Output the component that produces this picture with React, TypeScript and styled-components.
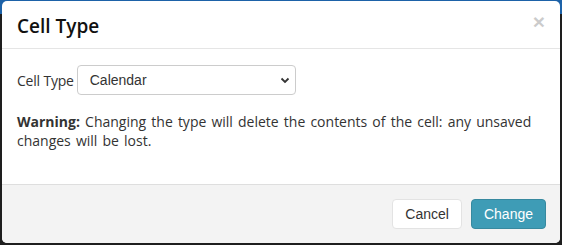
import styled, { createGlobalStyle } from "styled-components";

const GlobalStyle = createGlobalStyle`
    html, body {
        margin: 0;
        padding: 0;
    }

    body {
        width: 562px;
        height: 245px;
        overflow: hidden;
        background: linear-gradient(#1d62a8 0, #1d62a8 14px, #1e1e1e 14px);
    }
`;

const App = () => {
    return (
        <>
            <GlobalStyle />
            <Modal>
                <Header>
                    <Title>Cell Type</Title>
                    <CloseButton aria-label="Close">×</CloseButton>
                </Header>
                <Body>
                    <Field>
                        <Label>Cell Type</Label>
                        <SelectBox>
                            <span>Calendar</span>
                            <svg width="10" height="7" viewBox="0 0 10 7">
                                <path
                                    d="M1.5 1.5 L5 5 L8.5 1.5"
                                    fill="none"
                                    stroke="#333"
                                    strokeWidth="1.8"
                                />
                            </svg>
                        </SelectBox>
                    </Field>
                    <Warning>
                        <strong>Warning:</strong> Changing the type will delete the
                        contents of the cell: any unsaved changes will be lost.
                    </Warning>
                </Body>
                <Footer>
                    <Button>Cancel</Button>
                    <Button $primary>Change</Button>
                </Footer>
            </Modal>
        </>
    );
};

const Modal = styled.div`
    display: flex;
    flex-direction: column;

    width: 558px;
    height: 242px;

    margin: 1px 2px 0 2px;

    background: #fff;
    border-radius: 5px;
    overflow: hidden;
`;

const Header = styled.div`
    display: flex;
    align-items: center;
    justify-content: space-between;

    height: 47px;

    padding: 0 15px;

    border-bottom: 1px solid #e5e5e5;
`;

const Title = styled.h4`
    margin: 0;
    padding-top: 2px;

    font-family: "Open Sans", sans-serif;
    font-size: 19px;
    font-weight: 600;
    color: #111;
`;

const CloseButton = styled.span`
    margin-top: -6px;

    font-family: "Liberation Sans", Arial, sans-serif;
    font-size: 21px;
    font-weight: 700;
    color: #000;
    opacity: 0.2;
`;

const Body = styled.div`
    flex: 1;

    padding: 16px 15px 0 15px;

    font-family: "Open Sans", sans-serif;
    font-size: 14px;
    color: #333;
`;

const Field = styled.div`
    display: flex;
    align-items: center;
    gap: 3px;
`;

const Label = styled.span`
    font-size: 14px;
    letter-spacing: -0.2px;
    color: #333;
`;

const SelectBox = styled.div`
    display: flex;
    align-items: center;
    justify-content: space-between;

    width: 219px;
    height: 30px;
    box-sizing: border-box;

    padding: 0 5px 0 12px;

    font-family: "Liberation Sans", Arial, sans-serif;
    font-size: 14px;
    color: #333;

    border: 1px solid #ccc;
    border-radius: 4px;
`;

const Warning = styled.p`
    margin: 17px 0 0 0;

    line-height: 19px;
    word-spacing: 1.5px;

    strong {
        font-weight: 700;
    }
`;

const Footer = styled.div`
    display: flex;
    justify-content: flex-end;
    align-items: center;
    gap: 9px;

    height: 58px;

    padding: 0 14px 0 15px;

    background: #f3f3f3;
    border-top: 1px solid #dedede;
`;

const Button = styled.button<{ $primary?: boolean }>`
    height: 30px;

    padding: 0 12px;

    font-family: "Liberation Sans", Arial, sans-serif;
    font-size: 14px;
    color: ${({ $primary }) => ($primary ? "#fff" : "#333")};

    background: ${({ $primary }) => ($primary ? "#3e9cb6" : "#fff")};
    border: 1px solid ${({ $primary }) => ($primary ? "#37899f" : "#e3e3e3")};
    border-radius: 4px;
`;

export default App;
